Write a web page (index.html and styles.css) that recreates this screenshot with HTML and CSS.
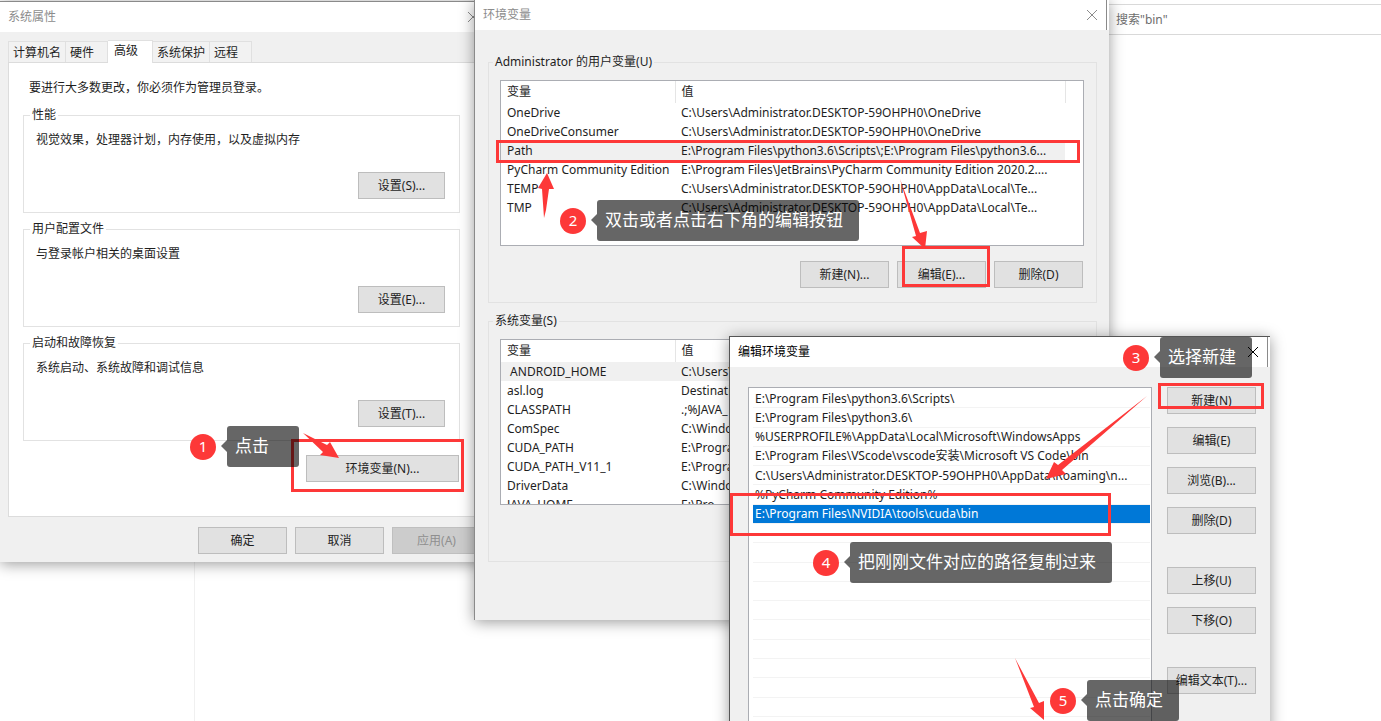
FILE: index.html
```html
<!DOCTYPE html>
<html lang="zh-CN">

<head>
  <meta charset="utf-8">
  <meta content="width=device-width, initial-scale=1.0" name="viewport">
  <title>环境变量</title>
  <link rel="stylesheet" href="styles.css">
</head>

<body>

  <main class="desktop">

    <!-- Explorer behind the dialogs -->
    <div class="explorer">
      <div class="explorer-bar">
        <input class="explorer-search" type="text" aria-label="搜索" value="搜索&quot;bin&quot;">
      </div>
      <div class="explorer-nav"></div>
    </div>

    <!-- System properties -->
    <section class="window window-system">
      <header class="titlebar">
        <h2>系统属性</h2>
        <button class="close" aria-label="关闭"><svg viewBox="0 0 12 12"><path d="M1 1L11 11M11 1L1 11"/></svg></button>
      </header>
      <div class="window-body">
        <div class="tabs">
          <button class="tab">计算机名</button>
          <button class="tab tab-wide">硬件</button>
          <button class="tab tab-wide active">高级</button>
          <button class="tab">系统保护</button>
          <button class="tab tab-wide">远程</button>
        </div>
        <div class="panel">
          <p class="intro">要进行大多数更改，你必须作为管理员登录。</p>
          <fieldset class="option">
            <legend>性能</legend>
            <p>视觉效果，处理器计划，内存使用，以及虚拟内存</p>
            <button class="btn">设置(S)...</button>
          </fieldset>
          <fieldset class="option">
            <legend>用户配置文件</legend>
            <p>与登录帐户相关的桌面设置</p>
            <button class="btn">设置(E)...</button>
          </fieldset>
          <fieldset class="option">
            <legend>启动和故障恢复</legend>
            <p>系统启动、系统故障和调试信息</p>
            <button class="btn">设置(T)...</button>
          </fieldset>
          <button class="btn btn-env">环境变量(N)...</button>
        </div>
        <div class="footer">
          <button class="btn">确定</button>
          <button class="btn">取消</button>
          <button class="btn" disabled>应用(A)</button>
        </div>
      </div>
    </section>

    <!-- Environment variables -->
    <section class="window window-env">
      <header class="titlebar">
        <h2>环境变量</h2>
        <button class="close" aria-label="关闭"><svg viewBox="0 0 12 12"><path d="M1 1L11 11M11 1L1 11"/></svg></button>
      </header>
      <div class="window-body">
        <fieldset class="vars">
          <legend>Administrator 的用户变量(U)</legend>
          <div class="listview">
            <table>
              <colgroup><col class="col-name"><col><col class="col-rest"></colgroup>
              <thead>
                <tr><th>变量</th><th>值</th><td></td></tr>
              </thead>
              <tbody>
                <tr><td>OneDrive</td><td>C:\Users\Administrator.DESKTOP-59OHPH0\OneDrive</td></tr>
                <tr><td>OneDriveConsumer</td><td>C:\Users\Administrator.DESKTOP-59OHPH0\OneDrive</td></tr>
                <tr class="selected"><td>Path</td><td>E:\Program Files\python3.6\Scripts\;E:\Program Files\python3.6...</td></tr>
                <tr><td>PyCharm Community Edition</td><td>E:\Program Files\JetBrains\PyCharm Community Edition 2020.2....</td></tr>
                <tr><td>TEMP</td><td>C:\Users\Administrator.DESKTOP-59OHPH0\AppData\Local\Te...</td></tr>
                <tr><td>TMP</td><td>C:\Users\Administrator.DESKTOP-59OHPH0\AppData\Local\Te...</td></tr>
              </tbody>
            </table>
          </div>
          <div class="actions">
            <button class="btn">新建(N)...</button>
            <button class="btn">编辑(E)...</button>
            <button class="btn">删除(D)</button>
          </div>
        </fieldset>
        <fieldset class="vars">
          <legend>系统变量(S)</legend>
          <div class="listview">
            <table>
              <colgroup><col class="col-name"><col><col class="col-rest"></colgroup>
              <thead>
                <tr><th>变量</th><th>值</th><td></td></tr>
              </thead>
              <tbody>
                <tr class="selected"><td>&nbsp;ANDROID_HOME</td><td>C:\Users\</td></tr>
                <tr><td>asl.log</td><td>Destination</td></tr>
                <tr><td>CLASSPATH</td><td>.;%JAVA_</td></tr>
                <tr><td>ComSpec</td><td>C:\Windows</td></tr>
                <tr><td>CUDA_PATH</td><td>E:\Program</td></tr>
                <tr><td>CUDA_PATH_V11_1</td><td>E:\Program</td></tr>
                <tr><td>DriverData</td><td>C:\Windows</td></tr>
                <tr><td>JAVA_HOME</td><td>E:\Pro</td></tr>
              </tbody>
            </table>
          </div>
        </fieldset>
      </div>
    </section>

    <!-- Edit environment variable -->
    <section class="window window-edit">
      <header class="titlebar">
        <h2>编辑环境变量</h2>
        <button class="close" aria-label="关闭"><svg viewBox="0 0 12 12"><path d="M1 1L11 11M11 1L1 11"/></svg></button>
      </header>
      <div class="window-body">
        <ul class="paths">
          <li>E:\Program Files\python3.6\Scripts\</li>
          <li>E:\Program Files\python3.6\</li>
          <li>%USERPROFILE%\AppData\Local\Microsoft\WindowsApps</li>
          <li>E:\Program Files\VScode\vscode安装\Microsoft VS Code\bin</li>
          <li>C:\Users\Administrator.DESKTOP-59OHPH0\AppData\Roaming\n...</li>
          <li>%PyCharm Community Edition%</li>
          <li class="selected">E:\Program Files\NVIDIA\tools\cuda\bin</li>
          <li></li>
          <li></li>
          <li></li>
          <li></li>
          <li></li>
          <li></li>
          <li></li>
          <li></li>
          <li></li>
          <li></li>
          <li></li>
        </ul>
        <div class="side">
          <button class="btn">新建(N)</button>
          <button class="btn">编辑(E)</button>
          <button class="btn">浏览(B)...</button>
          <button class="btn">删除(D)</button>
          <button class="btn btn-apart">上移(U)</button>
          <button class="btn">下移(O)</button>
          <button class="btn btn-apart">编辑文本(T)...</button>
        </div>
      </div>
    </section>

    <!-- Step marks -->
    <div class="mark mark-env"></div>
    <div class="mark mark-path"></div>
    <div class="mark mark-edit"></div>
    <div class="mark mark-new"></div>
    <div class="mark mark-value"></div>

    <svg class="arrows" width="1381" height="721" viewBox="0 0 1381 721">
      <path d="M303 433L327 445L330 442L339 458L320 455L323 452Z"/>
      <path d="M544 218L542 189L538 188L547 173L554 189L549 189L546 210Z"/>
      <path d="M900 179L920 233L927 231L925 249L912 237L916 236Z"/>
      <path d="M1147 396L1062 470L1066 474L1046 479L1054 462L1058 465Z"/>
      <path d="M1015 658L1039 703L1044 701L1044 720L1030 708L1034 707Z"/>
    </svg>

    <div class="step step-1"><span class="num">1</span><span class="tip">点击</span></div>
    <div class="step step-2"><span class="num">2</span><span class="tip">双击或者点击右下角的编辑按钮</span></div>
    <div class="step step-3"><span class="num">3</span><span class="tip">选择新建</span></div>
    <div class="step step-4"><span class="num">4</span><span class="tip">把刚刚文件对应的路径复制过来</span></div>
    <div class="step step-5"><span class="num">5</span><span class="tip">点击确定</span></div>

  </main>

</body>

</html>
```
FILE: styles.css
```css
* {
    box-sizing: border-box;
}

body {
    margin: 0;
    background-color: #fff;
    color: #1e1e1e;
    font-family: "Noto Sans", "Noto Sans CJK SC", sans-serif;
    font-size: 12px;
    line-height: 16px;
}

h2,
p,
ul,
fieldset {
    margin: 0;
    padding: 0;
}

button,
input {
    font: inherit;
    color: inherit;
}

.desktop {
    position: relative;
    height: 100vh;
    overflow: hidden;
}

/* explorer */
.explorer {
    display: flex;
    flex-direction: column;
    height: 100%;
    padding-top: 4px;
}

.explorer-bar {
    display: flex;
    justify-content: flex-end;
    height: 31px;
    border-top: 1px solid #d9d9d9;
    border-bottom: 1px solid #d9d9d9;
}

.explorer-search {
    width: 265px;
    padding: 0;
    border: 0;
    background: none;
    color: #6d6d6d;
}

.explorer-nav {
    flex: 1;
    width: 195px;
    border-right: 1px solid #f0f0f0;
}

/* windows */
.window {
    position: absolute;
    display: flex;
    flex-direction: column;
    border: 1px solid #8a8a8a;
    border-width: 0 0 0 1px;
    background-color: #fff;
    box-shadow: 0 2px 14px rgba(0, 0, 0, 0.4);
}

.window-system {
    left: 0;
    top: 1px;
    width: 486px;
    border-width: 1px 0 0;
}

.window-env {
    left: 474px;
    top: 0;
    width: 635px;
    height: 620px;
}

.window-edit {
    left: 729px;
    top: 336px;
    width: 541px;
    border-color: #555;
    border-width: 1px 0 0 1px;
}

.titlebar {
    display: flex;
    flex: none;
    align-items: center;
    justify-content: space-between;
    height: 30px;
    margin-right: 2px;
    padding: 0 8px;
    border-right: 1px solid #8a8a8a;
    color: #8c8c8c;
}

.titlebar h2 {
    font-size: 12px;
    font-weight: normal;
}

.window-edit .titlebar {
    color: #000;
}

.close {
    width: 12px;
    height: 12px;
    padding: 0;
    border: 0;
    background: none;
}

.close svg {
    display: block;
    fill: none;
    stroke: currentColor;
}

.window-system .titlebar {
    padding-right: 4px;
}

.window-body {
    flex: 1;
    background-color: #f0f0f0;
}

.btn {
    flex: none;
    width: 89px;
    height: 27px;
    padding: 0;
    border: 1px solid #bdbdbd;
    background-color: #e1e1e1;
    white-space: nowrap;
}

.btn:disabled {
    border-color: #bfbfbf;
    background-color: #ccc;
    color: #8f8f8f;
}

fieldset {
    min-width: 0;
    border: 1px solid #e2e2e2;
}

legend {
    margin-left: 4px;
    padding: 0 2px;
}

/* system properties */
.window-system .window-body {
    padding: 8px 8px 8px;
}

.tabs {
    display: flex;
    align-items: flex-end;
    height: 22px;
}

.tab {
    height: 21px;
    padding: 1px 4px 0;
    border: 1px solid #e0e0e0;
    border-width: 1px 1px 0 0;
    background-color: #f2f2f2;
    text-align: left;
}

.tab:first-child {
    border-left-width: 1px;
}

.tab-wide {
    padding-right: 13px;
}

.tab.active {
    height: 23px;
    margin-bottom: -1px;
    padding: 0 14px 3px 6px;
    background-color: #fff;
    z-index: 1;
}

.panel {
    display: flex;
    flex-direction: column;
    gap: 8px;
    padding: 17px 17px 34px 14px;
    border: 1px solid #dcdcdc;
    background-color: #fff;
}

.intro {
    margin-bottom: 3px;
    padding-left: 6px;
}

.option {
    height: 106px;
    padding: 9px 14px 0 2px;
}

.option p {
    padding-left: 10px;
}

.option .btn {
    display: block;
    width: 87px;
    margin: 24px 0 0 auto;
}

.btn-env {
    align-self: flex-end;
    width: 153px;
    margin: 6px 1px 0 0;
}

.footer {
    display: flex;
    gap: 8px;
    padding: 10px 0 0 190px;
}

/* environment variables */
.window-env .window-body {
    padding: 24px 12px 0 13px;
}

.vars {
    height: 249px;
    margin-bottom: 10px;
    padding: 10px 12px 0 0;
}

.listview {
    height: 166px;
    margin-left: 11px;
    overflow: hidden;
    border: 1px solid #abadb3;
    background-color: #fff;
}

.listview table {
    width: 100%;
    table-layout: fixed;
    border-collapse: collapse;
}

.col-name {
    width: 174px;
}

.col-rest {
    width: 18px;
}

.listview th,
.listview td {
    height: 19px;
    padding: 0 0 0 6px;
    overflow: hidden;
    font-weight: normal;
    line-height: 16px;
    text-align: left;
    white-space: nowrap;
}

.listview th {
    height: 22px;
    border-right: 1px solid #e5e5e5;
}

.selected td {
    background-color: #f0f0f0;
}

.actions {
    display: flex;
    justify-content: flex-end;
    gap: 8px;
    padding: 15px 1px 0 0;
}

/* edit dialog */
.window-edit .window-body {
    display: flex;
    gap: 15px;
    padding: 20px 14px 40px 18px;
}

.paths {
    display: flex;
    flex: 1;
    flex-direction: column;
    height: 350px;
    padding-top: 1px;
    border: 1px solid #abadb3;
    background-color: #fff;
    list-style: none;
}

.paths li {
    display: flex;
    flex: 1;
    align-items: center;
    margin: 0 1px 0 4px;
    padding: 1px 0 0 2px;
    border-bottom: 1px solid #f3f3f3;
    white-space: nowrap;
}

.paths .selected {
    background-color: #0078d7;
    color: #fff;
}

.side {
    display: flex;
    flex-direction: column;
    gap: 13px;
}

.btn-apart {
    margin-top: 20px;
}

/* step marks */
.mark {
    position: absolute;
    border: 3px solid #fd3838;
}

.mark-env {
    left: 291px;
    top: 439px;
    width: 173px;
    height: 53px;
}

.mark-path {
    left: 496px;
    top: 140px;
    width: 584px;
    height: 23px;
}

.mark-edit {
    left: 902px;
    top: 246px;
    width: 88px;
    height: 41px;
}

.mark-new {
    left: 1158px;
    top: 383px;
    width: 106px;
    height: 26px;
}

.mark-value {
    left: 730px;
    top: 493px;
    width: 381px;
    height: 43px;
}

.arrows {
    position: absolute;
    left: 0;
    top: 0;
    fill: #fd3838;
    pointer-events: none;
}

.step {
    position: absolute;
    display: flex;
    align-items: center;
    gap: 11px;
    color: #fff;
    font-size: 17px;
    white-space: nowrap;
}

.num {
    width: 26px;
    height: 26px;
    border-radius: 50%;
    background-color: #fd3838;
    font-size: 15px;
    line-height: 24px;
    text-align: center;
}

.tip {
    position: relative;
    min-width: 72px;
    padding: 0 16px 2px 8px;
    border-radius: 3px;
    background-color: rgba(0, 0, 0, 0.6);
    line-height: 39px;
}

.tip::before {
    content: "";
    position: absolute;
    right: 100%;
    top: 14px;
    border: 6px solid transparent;
    border-left-width: 0;
    border-right-color: rgba(0, 0, 0, 0.6);
}

.step-1 {
    left: 190px;
    top: 426px;
}

.step-2 {
    left: 560px;
    top: 200px;
}

.step-3 {
    left: 1123px;
    top: 337px;
}

.step-4 {
    left: 813px;
    top: 542px;
}

.step-5 {
    left: 1050px;
    top: 680px;
}
```
